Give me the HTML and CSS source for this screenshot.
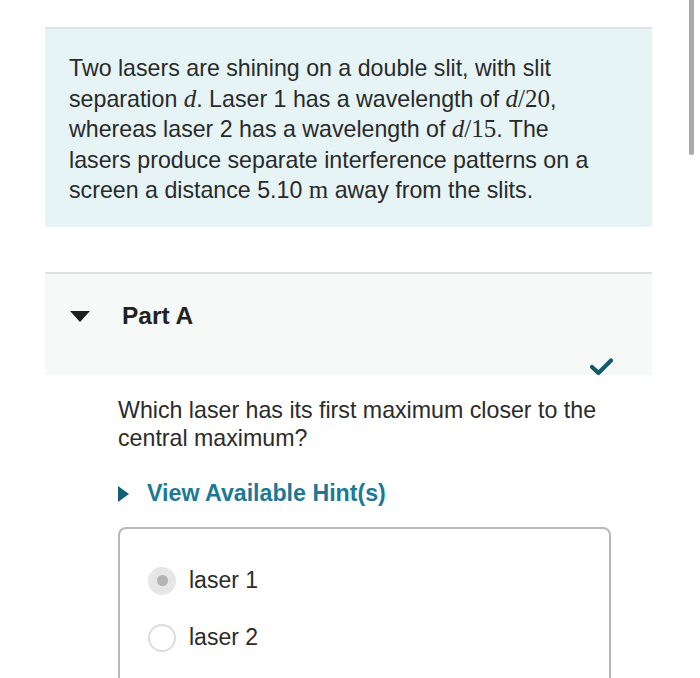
FILE: index.html
```html
<!DOCTYPE html>
<html>
<head>
<meta charset="utf-8">
<link rel="stylesheet" href="styles.css">
</head>
<body>
<div class="page">
  <div class="intro">
    <p>Two lasers are shining on a double slit, with slit separation <span class="mi">d</span>. Laser 1 has a wavelength of <span class="mi">d</span><span class="mn">/20</span>, whereas laser 2 has a wavelength of <span class="mi">d</span><span class="mn">/15</span>. The lasers produce separate interference patterns on a screen a distance 5.10 <span class="mn">m</span> away from the slits.</p>
  </div>

  <div class="part">
    <div class="part-head">
      <span class="caret-down"></span>
      <h2 class="part-title">Part A</h2>
    </div>
    <div class="part-status">
      <svg class="check" width="23" height="17" viewBox="0 0 23 17"><path d="M2 9 L8.5 15 L21 2.5" fill="none" stroke="#125b6c" stroke-width="4.2" stroke-linecap="round" stroke-linejoin="round"/></svg>
    </div>
  </div>

  <div class="question">
    <p class="q-text">Which laser has its first maximum closer to the central maximum?</p>
    <div class="hint"><span class="caret-right"></span><span class="hint-text">View Available Hint(s)</span></div>
    <div class="answers">
      <label class="option"><span class="radio radio-selected"><span class="dot"></span></span><span class="opt-label">laser 1</span></label>
      <label class="option"><span class="radio"></span><span class="opt-label">laser 2</span></label>
    </div>
  </div>
  <div class="scrollbar"></div>
</div>
</body>
</html>
```

FILE: styles.css
```css
html, body {
  margin: 0;
  padding: 0;
  background: #ffffff;
}
body {
  font-family: "Liberation Sans", Arial, sans-serif;
  color: #2b2b2b;
  overflow: hidden;
}
.page {
  width: 700px;
  height: 678px;
  position: relative;
  overflow: hidden;
}
.intro {
  margin: 27px 0 0 45px;
  width: 607px;
  box-sizing: border-box;
  border-top: 2px solid #e0e3e3;
  background: #e6f4f5;
  padding: 24px 40px 21px 24px;
}
.intro p {
  margin: 0;
  font-size: 23.2px;
  line-height: 30.5px;
  color: #2a2a2a;
}
.mi {
  font-family: "Liberation Serif", "Times New Roman", serif;
  font-style: italic;
  font-size: 25px;
  line-height: 1;
}
.mn {
  font-family: "Liberation Serif", "Times New Roman", serif;
  font-size: 25px;
  line-height: 1;
}
.part {
  margin: 45px 0 0 45px;
  width: 607px;
  height: 103px;
  box-sizing: border-box;
  border-top: 2px solid #e0e0e0;
  background: #f7f8f8;
  display: flex;
  flex-direction: column;
}
.part-head {
  display: flex;
  align-items: center;
  height: 86px;
  padding-left: 25px;
}
.caret-down {
  width: 0;
  height: 0;
  border-left: 10px solid transparent;
  border-right: 10px solid transparent;
  border-top: 11px solid #1f1f1f;
  margin-right: 32px;
  margin-top: 1px;
}
.part-title {
  margin: 0;
  font-size: 24.5px;
  font-weight: bold;
  color: #222;
}
.part-status {
  display: flex;
  justify-content: flex-end;
  padding-right: 39px;
}
.check {
  display: block;
}
.question {
  padding-left: 118px;
  width: 493px;
}
.q-text {
  margin: 21px 0 0 0;
  font-size: 23.2px;
  line-height: 28.5px;
  color: #2b2b2b;
}
.hint {
  display: flex;
  align-items: center;
  margin-top: 26px;
  height: 30px;
}
.caret-right {
  width: 0;
  height: 0;
  border-top: 8px solid transparent;
  border-bottom: 8px solid transparent;
  border-left: 11px solid #135f75;
  margin-right: 18px;
}
.hint-text {
  font-size: 23.2px;
  font-weight: bold;
  color: #1c7897;
}
.answers {
  margin-top: 18px;
  border: 2px solid #b8b8b8;
  border-radius: 8px;
  height: 200px;
  box-sizing: border-box;
  padding-top: 37px;
  padding-left: 28px;
}
.option {
  display: flex;
  align-items: center;
  height: 30px;
  margin-bottom: 27px;
}
.radio {
  width: 24px;
  height: 24px;
  border: 2px solid #dedede;
  border-radius: 50%;
  background: #fff;
  display: flex;
  align-items: center;
  justify-content: center;
  margin-right: 13px;
}
.radio-selected {
  border-color: #e6e6e6;
  background: #e6e6e6;
}
.dot {
  width: 11px;
  height: 11px;
  border-radius: 50%;
  background: #b3b3b3;
}
.opt-label {
  font-size: 23px;
  color: #2b2b2b;
}
.scrollbar {
  position: absolute;
  top: 0;
  left: 689px;
  width: 5px;
  height: 155px;
  background: #a9a9a9;
  border-radius: 0 0 3px 3px;
}
```
